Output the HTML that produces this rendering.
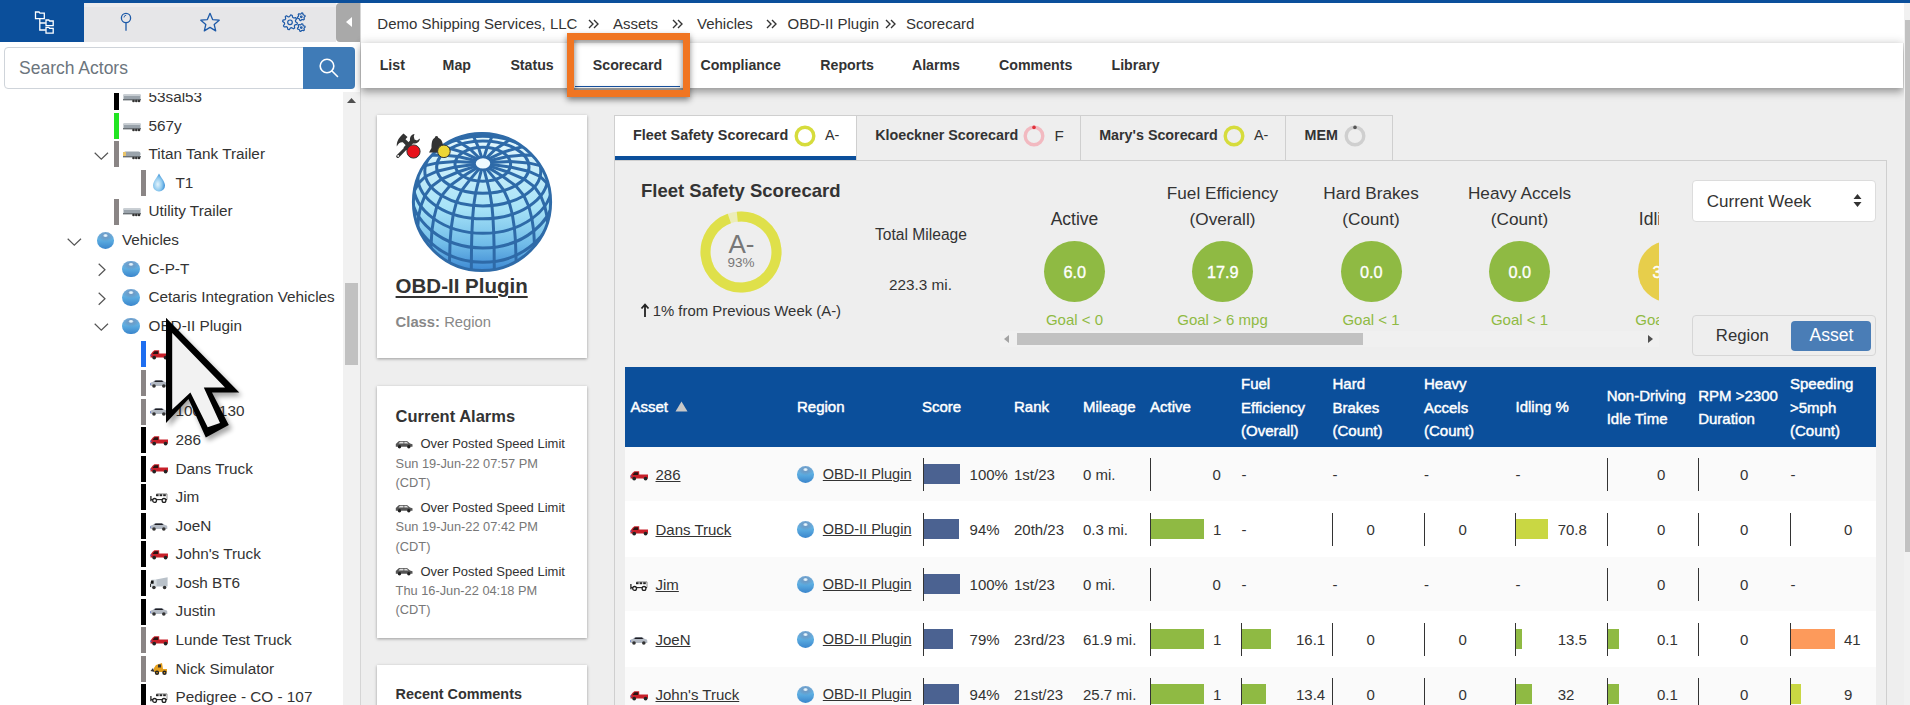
<!DOCTYPE html>
<html><head><meta charset="utf-8"><title>Scorecard</title>
<style>
*{box-sizing:border-box;margin:0;padding:0}
html,body{width:1910px;height:705px;overflow:hidden}
body{position:relative;background:#eeeeee;font-family:"Liberation Sans",sans-serif;color:#333}
.a{position:absolute}
.t{position:absolute;white-space:nowrap;line-height:1}
svg{position:absolute;overflow:visible}
u{text-decoration:underline;text-underline-offset:1px}
</style></head><body>
<div class="a" style="left:0px;top:0px;width:1910px;height:3px;background:#0b4f9b"></div>
<div class="a" style="left:0px;top:3px;width:360px;height:702px;background:#fff"></div>
<div class="a" style="left:0px;top:0px;width:84px;height:42px;background:#0b4f9b"></div>
<div class="a" style="left:84px;top:3px;width:252px;height:39px;background:#e6e6e8"></div>
<div class="a" style="left:84px;top:3px;width:252px;height:4px;background:#ececee"></div>
<div class="a" style="left:336px;top:3px;width:24px;height:39px;background:#a9a9a9;border-radius:4px 0 0 4px"></div>
<svg style="left:346px;top:17px" width="6" height="10"><path d="M6 0 L0 5 L6 10 Z" fill="#fff"/></svg>
<svg style="left:34px;top:10px" width="22" height="24" fill="none" stroke="#fff" stroke-width="1.3">
<path d="M1.5 2 h3.5 l1 1.2 h4.3 v5.4 h-8.8 z"/>
<path d="M5.8 8.8 v11.2 h6 M5.8 13 h6"/>
<path d="M12 10 h2.8 l0.8 1 h3.6 v4.7 h-7.2 z"/>
<path d="M12 17.4 h2.8 l0.8 1 h3.6 v4.7 h-7.2 z"/>
</svg>
<svg style="left:118px;top:10px" width="16" height="24" fill="none" stroke="#1d5aa8" stroke-width="1.3">
<circle cx="8" cy="8" r="4.6"/><path d="M8 12.6 V20.7"/><path d="M6 7.5 a2.2 2.2 0 0 1 2.2 -2.2" stroke-width="0.9"/>
</svg>
<svg style="left:199px;top:11px" width="22" height="22" fill="none" stroke="#1d5aa8" stroke-width="1.3" stroke-linejoin="round">
<path d="M11 2.3 L13.6 8.6 L20.2 9.2 L15.2 13.5 L16.7 19.9 L11 16.4 L5.3 19.9 L6.8 13.5 L1.8 9.2 L8.4 8.6 Z"/>
</svg>
<svg style="left:280px;top:12px" width="30" height="22" fill="none" stroke="#1d5aa8" stroke-width="1.2"><path d="M10.73 2.94 L12.15 3.22 L12.64 5.36 L13.55 5.97 L15.72 5.61 L16.53 6.81 L15.36 8.67 L15.57 9.75 L17.36 11.03 L17.08 12.45 L14.94 12.94 L14.33 13.85 L14.69 16.02 L13.49 16.83 L11.63 15.66 L10.55 15.87 L9.27 17.66 L7.85 17.38 L7.36 15.24 L6.45 14.63 L4.28 14.99 L3.47 13.79 L4.64 11.93 L4.43 10.85 L2.64 9.57 L2.92 8.15 L5.06 7.66 L5.67 6.75 L5.31 4.58 L6.51 3.77 L8.37 4.94 L9.45 4.73 Z" stroke-linejoin="round"/><circle cx="10" cy="10.3" r="2.3"/><path d="M21.81 0.93 L22.79 1.20 L23.07 2.50 L23.60 3.03 L24.90 3.31 L25.17 4.29 L24.18 5.18 L23.98 5.91 L24.39 7.17 L23.67 7.89 L22.41 7.48 L21.68 7.68 L20.79 8.67 L19.81 8.40 L19.53 7.10 L19.00 6.57 L17.70 6.29 L17.43 5.31 L18.42 4.42 L18.62 3.69 L18.21 2.43 L18.93 1.71 L20.19 2.12 L20.92 1.92 Z" stroke-linejoin="round"/><circle cx="21.3" cy="4.8" r="0.8"/><path d="M21.81 11.73 L22.79 12.00 L23.07 13.30 L23.60 13.83 L24.90 14.11 L25.17 15.09 L24.18 15.98 L23.98 16.71 L24.39 17.97 L23.67 18.69 L22.41 18.28 L21.68 18.48 L20.79 19.47 L19.81 19.20 L19.53 17.90 L19.00 17.37 L17.70 17.09 L17.43 16.11 L18.42 15.22 L18.62 14.49 L18.21 13.23 L18.93 12.51 L20.19 12.92 L20.92 12.72 Z" stroke-linejoin="round"/><circle cx="21.3" cy="15.6" r="0.8"/></svg>
<div class="a" style="left:4px;top:47px;width:300px;height:42px;background:#fff;border:1px solid #cfd4da;border-radius:4px 0 0 4px"></div>
<div class="t" style="left:19.0px;top:59.7px;font-size:17.5px;font-weight:400;color:#6c757d;">Search Actors</div>
<div class="a" style="left:303px;top:47px;width:52px;height:42px;background:#3f7bb7;border-radius:0 4px 4px 0"></div>
<svg style="left:318px;top:57px" width="22" height="22" fill="none" stroke="#fff" stroke-width="1.6">
<circle cx="9" cy="9" r="6.8"/><path d="M14 14 L19.5 19.5" stroke-linecap="round"/>
</svg>
<div class="a" style="left:360px;top:3px;width:1px;height:702px;background:#d5d5d5"></div>
<div class="a" style="left:343px;top:92px;width:17px;height:613px;background:#f1f1f1"></div>
<svg style="left:347px;top:98px" width="9" height="6"><path d="M0 5 L4.5 0 L9 5 Z" fill="#505050"/></svg>
<div class="a" style="left:345px;top:283px;width:13px;height:82px;background:#c1c1c1"></div>
<div class="a" style="left:0;top:93px;width:343px;height:612px;overflow:hidden">
<div class="a" style="left:0;top:-93px;width:343px;height:705px">
<div class="a" style="left:114px;top:84.2px;width:5px;height:26px;background:#000"></div>
<svg style="left:123px;top:93.0px" width="18" height="10">
<rect x="0.5" y="1.5" width="17" height="5" fill="#9aa3ab"/><rect x="0.5" y="1.5" width="17" height="1.5" fill="#c8ced3"/>
<rect x="0" y="6" width="18" height="1.4" fill="#6a7075"/><circle cx="10.5" cy="8" r="1.3" fill="#333"/><circle cx="13.3" cy="8" r="1.3" fill="#333"/><circle cx="16" cy="8" r="1.3" fill="#333"/></svg>
<div class="t" style="left:148.5px;top:89.1px;font-size:15.3px;font-weight:400;color:#333;">53sal53</div>
<div class="a" style="left:114px;top:112.8px;width:5px;height:26px;background:#22e522"></div>
<svg style="left:123px;top:121.6px" width="18" height="10">
<rect x="0.5" y="1.5" width="17" height="5" fill="#9aa3ab"/><rect x="0.5" y="1.5" width="17" height="1.5" fill="#c8ced3"/>
<rect x="0" y="6" width="18" height="1.4" fill="#6a7075"/><circle cx="10.5" cy="8" r="1.3" fill="#333"/><circle cx="13.3" cy="8" r="1.3" fill="#333"/><circle cx="16" cy="8" r="1.3" fill="#333"/></svg>
<div class="t" style="left:148.5px;top:117.7px;font-size:15.3px;font-weight:400;color:#333;">567y</div>
<div class="a" style="left:114px;top:141.3px;width:5px;height:26px;background:#8a8585"></div>
<svg style="left:94px;top:151.8px" width="15" height="8"><path d="M0.7 0.7 L7.3 7.2 L14 0.7" fill="none" stroke="#555" stroke-width="1.2"/></svg>
<svg style="left:123px;top:150.1px" width="18" height="10">
<rect x="0.5" y="1.5" width="17" height="5" rx="2" fill="#9aa3ab"/><rect x="0" y="2" width="3" height="4" fill="#e9c46a"/>
<rect x="0" y="6" width="18" height="1.4" fill="#6a7075"/><circle cx="10.5" cy="8" r="1.3" fill="#333"/><circle cx="13.3" cy="8" r="1.3" fill="#333"/><circle cx="16" cy="8" r="1.3" fill="#333"/></svg>
<div class="t" style="left:148.5px;top:146.3px;font-size:15.3px;font-weight:400;color:#333;">Titan Tank Trailer</div>
<div class="a" style="left:141px;top:169.9px;width:5px;height:26px;background:#8a8585"></div>
<svg style="left:152px;top:173.4px" width="14" height="19">
<defs><radialGradient id="dg" cx="40%" cy="60%" r="60%"><stop offset="0" stop-color="#e3f3fc"/><stop offset="0.6" stop-color="#8cc8ee"/><stop offset="1" stop-color="#3b8fd6"/></radialGradient></defs>
<path d="M7 0.5 C8.5 4 13 8.5 13 12.5 A6 6 0 0 1 1 12.5 C1 8.5 5.5 4 7 0.5 Z" fill="url(#dg)"/></svg>
<div class="t" style="left:175.5px;top:174.9px;font-size:15.3px;font-weight:400;color:#333;">T1</div>
<div class="a" style="left:114px;top:198.5px;width:5px;height:26px;background:#8a8585"></div>
<svg style="left:123px;top:207.3px" width="18" height="10">
<rect x="0.5" y="1.5" width="17" height="5" fill="#9aa3ab"/><rect x="0.5" y="1.5" width="17" height="1.5" fill="#c8ced3"/>
<rect x="0" y="6" width="18" height="1.4" fill="#6a7075"/><circle cx="10.5" cy="8" r="1.3" fill="#333"/><circle cx="13.3" cy="8" r="1.3" fill="#333"/><circle cx="16" cy="8" r="1.3" fill="#333"/></svg>
<div class="t" style="left:148.5px;top:203.4px;font-size:15.3px;font-weight:400;color:#333;">Utility Trailer</div>
<div class="a" style="left:96.8px;top:232.0px;width:17.4px;height:16.8px;border-radius:50%;background:radial-gradient(ellipse 22% 16% at 50% 21%, #eef7fc 0%, #d7ebf7 35%, rgba(110,155,198,0.95) 70%, rgba(110,155,198,0) 100%), radial-gradient(ellipse 45% 30% at 50% 26%, rgba(108,150,192,0.9) 0%, rgba(108,150,192,0.5) 60%, rgba(108,150,192,0) 100%), linear-gradient(#78addb, #5eafe2 45%, #3a85cc)"></div>
<svg style="left:66.5px;top:237.6px" width="15" height="8"><path d="M0.7 0.7 L7.3 7.2 L14 0.7" fill="none" stroke="#555" stroke-width="1.2"/></svg>
<div class="t" style="left:122.0px;top:232.0px;font-size:15.3px;font-weight:400;color:#333;">Vehicles</div>
<div class="a" style="left:122.3px;top:260.5px;width:17.4px;height:16.8px;border-radius:50%;background:radial-gradient(ellipse 22% 16% at 50% 21%, #eef7fc 0%, #d7ebf7 35%, rgba(110,155,198,0.95) 70%, rgba(110,155,198,0) 100%), radial-gradient(ellipse 45% 30% at 50% 26%, rgba(108,150,192,0.9) 0%, rgba(108,150,192,0.5) 60%, rgba(108,150,192,0) 100%), linear-gradient(#78addb, #5eafe2 45%, #3a85cc)"></div>
<svg style="left:98px;top:263.4px" width="8" height="14"><path d="M0.7 0.7 L7 6.7 L0.7 12.8" fill="none" stroke="#555" stroke-width="1.2"/></svg>
<div class="t" style="left:148.5px;top:260.6px;font-size:15.3px;font-weight:400;color:#333;">C-P-T</div>
<div class="a" style="left:122.3px;top:289.1px;width:17.4px;height:16.8px;border-radius:50%;background:radial-gradient(ellipse 22% 16% at 50% 21%, #eef7fc 0%, #d7ebf7 35%, rgba(110,155,198,0.95) 70%, rgba(110,155,198,0) 100%), radial-gradient(ellipse 45% 30% at 50% 26%, rgba(108,150,192,0.9) 0%, rgba(108,150,192,0.5) 60%, rgba(108,150,192,0) 100%), linear-gradient(#78addb, #5eafe2 45%, #3a85cc)"></div>
<svg style="left:98px;top:292.0px" width="8" height="14"><path d="M0.7 0.7 L7 6.7 L0.7 12.8" fill="none" stroke="#555" stroke-width="1.2"/></svg>
<div class="t" style="left:148.5px;top:289.1px;font-size:15.3px;font-weight:400;color:#333;">Cetaris Integration Vehicles</div>
<div class="a" style="left:122.3px;top:317.7px;width:17.4px;height:16.8px;border-radius:50%;background:radial-gradient(ellipse 22% 16% at 50% 21%, #eef7fc 0%, #d7ebf7 35%, rgba(110,155,198,0.95) 70%, rgba(110,155,198,0) 100%), radial-gradient(ellipse 45% 30% at 50% 26%, rgba(108,150,192,0.9) 0%, rgba(108,150,192,0.5) 60%, rgba(108,150,192,0) 100%), linear-gradient(#78addb, #5eafe2 45%, #3a85cc)"></div>
<svg style="left:94px;top:323.3px" width="15" height="8"><path d="M0.7 0.7 L7.3 7.2 L14 0.7" fill="none" stroke="#555" stroke-width="1.2"/></svg>
<div class="t" style="left:148.5px;top:317.7px;font-size:15.3px;font-weight:400;color:#333;">OBD-II Plugin</div>
<div class="a" style="left:141px;top:341.3px;width:5px;height:26px;background:#1e6ef0"></div>
<svg style="left:150px;top:350.1px" width="18" height="10">
<path d="M0.5 4.6 L2.6 1.8 L4.4 0.3 L9.2 0.3 L9.2 3.4 L18 3.4 L18 7.6 L0.5 7.6 Z" fill="#c8202a"/><path d="M4.6 1.3 L8.2 1.3 L8.2 3.9 L2.6 3.9 Z" fill="#2a1212"/><rect x="0.3" y="4.6" width="1.2" height="1.4" fill="#4a6fd0"/>
<circle cx="4.2" cy="7.6" r="1.9" fill="#222"/><circle cx="15.6" cy="7.6" r="1.9" fill="#222"/></svg>
<div class="t" style="left:175.5px;top:346.3px;font-size:15.3px;font-weight:400;color:#333;"></div>
<div class="a" style="left:141px;top:369.9px;width:5px;height:26px;background:#8a8585"></div>
<svg style="left:150px;top:378.7px" width="18" height="10">
<path d="M0.3 4.6 C0.3 3.8 1 3.3 2.6 3.1 L5.2 1 L12.2 1 L14.9 3.1 C16.6 3.3 17.3 3.9 17.3 4.8 L17.3 7 L0.3 7 Z" fill="#b3bac4"/><path d="M5.6 1.4 L11.8 1.4 L13.6 3.1 L4 3.1 Z" fill="#1e1e24"/><rect x="0" y="4.2" width="1" height="1.8" fill="#7a8ccc"/>
<circle cx="4" cy="7" r="1.8" fill="#333"/><circle cx="13.8" cy="7" r="1.8" fill="#333"/></svg>
<div class="t" style="left:175.5px;top:374.9px;font-size:15.3px;font-weight:400;color:#333;"></div>
<div class="a" style="left:141px;top:398.5px;width:5px;height:26px;background:#8a8585"></div>
<svg style="left:150px;top:407.3px" width="18" height="10">
<path d="M0.3 4.6 C0.3 3.8 1 3.3 2.6 3.1 L5.2 1 L12.2 1 L14.9 3.1 C16.6 3.3 17.3 3.9 17.3 4.8 L17.3 7 L0.3 7 Z" fill="#b3bac4"/><path d="M5.6 1.4 L11.8 1.4 L13.6 3.1 L4 3.1 Z" fill="#1e1e24"/><rect x="0" y="4.2" width="1" height="1.8" fill="#7a8ccc"/>
<circle cx="4" cy="7" r="1.8" fill="#333"/><circle cx="13.8" cy="7" r="1.8" fill="#333"/></svg>
<div class="t" style="left:175.5px;top:403.4px;font-size:15.3px;font-weight:400;color:#333;">1000T130</div>
<div class="a" style="left:141px;top:427.1px;width:5px;height:26px;background:#000"></div>
<svg style="left:150px;top:435.9px" width="18" height="10">
<path d="M0.5 4.6 L2.6 1.8 L4.4 0.3 L9.2 0.3 L9.2 3.4 L18 3.4 L18 7.6 L0.5 7.6 Z" fill="#c8202a"/><path d="M4.6 1.3 L8.2 1.3 L8.2 3.9 L2.6 3.9 Z" fill="#2a1212"/><rect x="0.3" y="4.6" width="1.2" height="1.4" fill="#4a6fd0"/>
<circle cx="4.2" cy="7.6" r="1.9" fill="#222"/><circle cx="15.6" cy="7.6" r="1.9" fill="#222"/></svg>
<div class="t" style="left:175.5px;top:432.0px;font-size:15.3px;font-weight:400;color:#333;">286</div>
<div class="a" style="left:141px;top:455.6px;width:5px;height:26px;background:#000"></div>
<svg style="left:150px;top:464.4px" width="18" height="10">
<path d="M0.5 4.6 L2.6 1.8 L4.4 0.3 L9.2 0.3 L9.2 3.4 L18 3.4 L18 7.6 L0.5 7.6 Z" fill="#c8202a"/><path d="M4.6 1.3 L8.2 1.3 L8.2 3.9 L2.6 3.9 Z" fill="#2a1212"/><rect x="0.3" y="4.6" width="1.2" height="1.4" fill="#4a6fd0"/>
<circle cx="4.2" cy="7.6" r="1.9" fill="#222"/><circle cx="15.6" cy="7.6" r="1.9" fill="#222"/></svg>
<div class="t" style="left:175.5px;top:460.6px;font-size:15.3px;font-weight:400;color:#333;">Dans Truck</div>
<div class="a" style="left:141px;top:484.2px;width:5px;height:26px;background:#000"></div>
<svg style="left:150px;top:493.0px" width="18" height="11">
<path d="M3.2 3 L5.6 0.9 L17 0.9 L17 6.6 L1.8 6.6 L1.8 4 Z" fill="#fff"/><rect x="6" y="1.2" width="2.6" height="2" fill="#222"/><rect x="9.6" y="1.2" width="2.6" height="2" fill="#222"/><rect x="13.2" y="1.2" width="2.6" height="2" fill="#222"/><path d="M6.5 0.9 H17 V6.6" fill="none" stroke="#444" stroke-width="0.6"/>
<path d="M0.9 3 V8.2" stroke="#222" stroke-width="1.3"/><path d="M1 6.6 H17" stroke="#222" stroke-width="1.1"/>
<circle cx="4.6" cy="7.4" r="1.9" fill="#fff" stroke="#222" stroke-width="1.3"/><circle cx="14" cy="7.4" r="1.9" fill="#fff" stroke="#222" stroke-width="1.3"/></svg>
<div class="t" style="left:175.5px;top:489.1px;font-size:15.3px;font-weight:400;color:#333;">Jim</div>
<div class="a" style="left:141px;top:512.8px;width:5px;height:26px;background:#000"></div>
<svg style="left:150px;top:521.6px" width="18" height="10">
<path d="M0.3 4.6 C0.3 3.8 1 3.3 2.6 3.1 L5.2 1 L12.2 1 L14.9 3.1 C16.6 3.3 17.3 3.9 17.3 4.8 L17.3 7 L0.3 7 Z" fill="#b3bac4"/><path d="M5.6 1.4 L11.8 1.4 L13.6 3.1 L4 3.1 Z" fill="#1e1e24"/><rect x="0" y="4.2" width="1" height="1.8" fill="#7a8ccc"/>
<circle cx="4" cy="7" r="1.8" fill="#333"/><circle cx="13.8" cy="7" r="1.8" fill="#333"/></svg>
<div class="t" style="left:175.5px;top:517.7px;font-size:15.3px;font-weight:400;color:#333;">JoeN</div>
<div class="a" style="left:141px;top:541.3px;width:5px;height:26px;background:#000"></div>
<svg style="left:150px;top:550.1px" width="18" height="10">
<path d="M0.5 4.6 L2.6 1.8 L4.4 0.3 L9.2 0.3 L9.2 3.4 L18 3.4 L18 7.6 L0.5 7.6 Z" fill="#c8202a"/><path d="M4.6 1.3 L8.2 1.3 L8.2 3.9 L2.6 3.9 Z" fill="#2a1212"/><rect x="0.3" y="4.6" width="1.2" height="1.4" fill="#4a6fd0"/>
<circle cx="4.2" cy="7.6" r="1.9" fill="#222"/><circle cx="15.6" cy="7.6" r="1.9" fill="#222"/></svg>
<div class="t" style="left:175.5px;top:546.3px;font-size:15.3px;font-weight:400;color:#333;">John's Truck</div>
<div class="a" style="left:141px;top:569.9px;width:5px;height:26px;background:#000"></div>
<svg style="left:150px;top:576.7px" width="18" height="14">
<path d="M6 2.6 L17.6 0.3 L17.6 9.6 L6 9.6 Z" fill="#b9c1c9"/><path d="M0.3 5.2 L1.8 2.6 L6.6 2.6 L6.6 10.4 L0.3 10.4 Z" fill="#d5dbe0"/><path d="M1.2 3.4 L3.6 3.4 L3.6 6.8 L0.5 6.8 Z" fill="#111"/><rect x="0" y="7" width="0.9" height="3" fill="#222"/>
<circle cx="3.9" cy="10.5" r="1.8" fill="#333"/><circle cx="14.6" cy="10.5" r="1.8" fill="#333"/></svg>
<div class="t" style="left:175.5px;top:574.9px;font-size:15.3px;font-weight:400;color:#333;">Josh BT6</div>
<div class="a" style="left:141px;top:598.5px;width:5px;height:26px;background:#000"></div>
<svg style="left:150px;top:607.3px" width="18" height="10">
<path d="M0.3 4.6 C0.3 3.8 1 3.3 2.6 3.1 L5.2 1 L12.2 1 L14.9 3.1 C16.6 3.3 17.3 3.9 17.3 4.8 L17.3 7 L0.3 7 Z" fill="#b3bac4"/><path d="M5.6 1.4 L11.8 1.4 L13.6 3.1 L4 3.1 Z" fill="#1e1e24"/><rect x="0" y="4.2" width="1" height="1.8" fill="#7a8ccc"/>
<circle cx="4" cy="7" r="1.8" fill="#333"/><circle cx="13.8" cy="7" r="1.8" fill="#333"/></svg>
<div class="t" style="left:175.5px;top:603.4px;font-size:15.3px;font-weight:400;color:#333;">Justin</div>
<div class="a" style="left:141px;top:627.0px;width:5px;height:26px;background:#8a8585"></div>
<svg style="left:150px;top:635.8px" width="18" height="10">
<path d="M0.5 4.6 L2.6 1.8 L4.4 0.3 L9.2 0.3 L9.2 3.4 L18 3.4 L18 7.6 L0.5 7.6 Z" fill="#c8202a"/><path d="M4.6 1.3 L8.2 1.3 L8.2 3.9 L2.6 3.9 Z" fill="#2a1212"/><rect x="0.3" y="4.6" width="1.2" height="1.4" fill="#4a6fd0"/>
<circle cx="4.2" cy="7.6" r="1.9" fill="#222"/><circle cx="15.6" cy="7.6" r="1.9" fill="#222"/></svg>
<div class="t" style="left:175.5px;top:632.0px;font-size:15.3px;font-weight:400;color:#333;">Lunde Test Truck</div>
<div class="a" style="left:141px;top:655.6px;width:5px;height:26px;background:#8a8585"></div>
<svg style="left:150px;top:662.4px" width="18" height="14">
<path d="M6 3 L12 1 L13 7 L17 7 L17 10 L4 10 L4 6 Z" fill="#e5a01e"/><rect x="8" y="2.5" width="3" height="3" fill="#333"/><path d="M0.5 9 L3 6 L4.5 10 Z" fill="#333"/>
<circle cx="7" cy="10.8" r="2.2" fill="#222"/><circle cx="14.5" cy="10.8" r="2.2" fill="#222"/><circle cx="7" cy="10.8" r="0.8" fill="#e5a01e"/><circle cx="14.5" cy="10.8" r="0.8" fill="#e5a01e"/></svg>
<div class="t" style="left:175.5px;top:660.6px;font-size:15.3px;font-weight:400;color:#333;">Nick Simulator</div>
<div class="a" style="left:141px;top:684.2px;width:5px;height:26px;background:#000"></div>
<svg style="left:150px;top:693.0px" width="18" height="11">
<path d="M3.2 3 L5.6 0.9 L17 0.9 L17 6.6 L1.8 6.6 L1.8 4 Z" fill="#fff"/><rect x="6" y="1.2" width="2.6" height="2" fill="#222"/><rect x="9.6" y="1.2" width="2.6" height="2" fill="#222"/><rect x="13.2" y="1.2" width="2.6" height="2" fill="#222"/><path d="M6.5 0.9 H17 V6.6" fill="none" stroke="#444" stroke-width="0.6"/>
<path d="M0.9 3 V8.2" stroke="#222" stroke-width="1.3"/><path d="M1 6.6 H17" stroke="#222" stroke-width="1.1"/>
<circle cx="4.6" cy="7.4" r="1.9" fill="#fff" stroke="#222" stroke-width="1.3"/><circle cx="14" cy="7.4" r="1.9" fill="#fff" stroke="#222" stroke-width="1.3"/></svg>
<div class="t" style="left:175.5px;top:689.1px;font-size:15.3px;font-weight:400;color:#333;">Pedigree - CO - 107</div>
</div></div>
<svg style="left:0;top:0" width="300" height="460">
<defs><filter id="cs" x="-30%" y="-30%" width="160%" height="160%"><feGaussianBlur stdDeviation="2.5"/></filter></defs>
<polygon points="169,322 169,427 191,403 208,441 232,429 215,397 242,396" fill="#000" opacity="0.35" filter="url(#cs)"/>
<polygon points="166,317.7 166,423 188.5,399 205.8,437.4 228.8,425 212,392.4 239.3,392.4" fill="#000"/>
<polygon points="172.2,333 172.2,409.6 190.4,392.4 207.7,427.2 220,423 203.8,387.6 225,387.6" fill="#f2f2f2"/>
</svg>
<div class="a" style="left:361px;top:3px;width:1543px;height:40px;background:#fff"></div>
<div class="t" style="left:377.3px;top:16.3px;font-size:15px;font-weight:400;color:#333;letter-spacing:0px">Demo Shipping Services, LLC</div>
<div class="t" style="left:697.0px;top:16.3px;font-size:15px;font-weight:400;color:#333;letter-spacing:0px">Vehicles</div>
<div class="t" style="left:613.0px;top:16.3px;font-size:15px;font-weight:400;color:#333;letter-spacing:0px">Assets</div>
<div class="t" style="left:787.5px;top:16.3px;font-size:15px;font-weight:400;color:#333;letter-spacing:0px">OBD-II Plugin</div>
<div class="t" style="left:906.0px;top:16.3px;font-size:15px;font-weight:400;color:#333;letter-spacing:0px">Scorecard</div>
<svg style="left:588px;top:19px" width="11" height="10" fill="none" stroke="#333" stroke-width="1.35"><path d="M1 1 L5 5 L1 9 M6 1 L10 5 L6 9"/></svg>
<svg style="left:672px;top:19px" width="11" height="10" fill="none" stroke="#333" stroke-width="1.35"><path d="M1 1 L5 5 L1 9 M6 1 L10 5 L6 9"/></svg>
<svg style="left:766.3px;top:19px" width="11" height="10" fill="none" stroke="#333" stroke-width="1.35"><path d="M1 1 L5 5 L1 9 M6 1 L10 5 L6 9"/></svg>
<svg style="left:884.5px;top:19px" width="11" height="10" fill="none" stroke="#333" stroke-width="1.35"><path d="M1 1 L5 5 L1 9 M6 1 L10 5 L6 9"/></svg>
<div class="a" style="left:361px;top:43px;width:1542px;height:45px;background:#fff;box-shadow:0 -3px 8px rgba(0,0,0,0.07), 0 4px 8px rgba(0,0,0,0.36)"></div>
<div class="t" style="left:379.7px;top:57.5px;font-size:14.2px;font-weight:700;color:#333;">List</div>
<div class="t" style="left:442.6px;top:57.5px;font-size:14.2px;font-weight:700;color:#333;">Map</div>
<div class="t" style="left:510.4px;top:57.5px;font-size:14.2px;font-weight:700;color:#333;">Status</div>
<div class="t" style="left:592.8px;top:57.5px;font-size:14.2px;font-weight:700;color:#333;">Scorecard</div>
<div class="t" style="left:700.4px;top:57.5px;font-size:14.2px;font-weight:700;color:#333;">Compliance</div>
<div class="t" style="left:820.3px;top:57.5px;font-size:14.2px;font-weight:700;color:#333;">Reports</div>
<div class="t" style="left:911.9px;top:57.5px;font-size:14.2px;font-weight:700;color:#333;">Alarms</div>
<div class="t" style="left:999.0px;top:57.5px;font-size:14.2px;font-weight:700;color:#333;">Comments</div>
<div class="t" style="left:1111.5px;top:57.5px;font-size:14.2px;font-weight:700;color:#333;">Library</div>
<div class="a" style="left:575px;top:85.6px;width:105px;height:1.6px;background:#1753a3"></div>
<div class="a" style="left:567px;top:33px;width:123px;height:64px;border:7px solid #f07522;box-shadow:0 3px 6px rgba(0,0,0,0.45), inset 0 1px 6px rgba(0,0,0,0.55)"></div>
<div class="a" style="left:1904px;top:3px;width:6px;height:702px;background:#f1f1f1"></div>
<div class="a" style="left:1905px;top:20px;width:5px;height:532px;background:#c1c1c1"></div>
<div class="a" style="left:377px;top:115px;width:210px;height:243px;background:#fff;box-shadow:0 1px 3px rgba(0,0,0,0.35)"></div>
<div class="a" style="left:377px;top:386px;width:210px;height:252px;background:#fff;box-shadow:0 1px 3px rgba(0,0,0,0.35)"></div>
<div class="a" style="left:377px;top:665px;width:210px;height:60px;background:#fff;box-shadow:0 1px 3px rgba(0,0,0,0.35)"></div>
<svg style="left:407.2px;top:126.7px" width="150" height="150"><defs><linearGradient id="bg1" x1="0" y1="0" x2="0" y2="1"><stop offset="0" stop-color="#e8f9fd"/><stop offset="0.55" stop-color="#a6e2f7"/><stop offset="0.8" stop-color="#72bde9"/><stop offset="1" stop-color="#3c88d3"/></linearGradient><clipPath id="gc"><circle cx="75" cy="75" r="69.2"/></clipPath></defs><circle cx="75" cy="75" r="69.2" fill="url(#bg1)"/><g clip-path="url(#gc)" fill="none" stroke="#2e6aa8" stroke-width="3"><ellipse cx="75.8" cy="37.3" rx="27.8" ry="17.0"/><ellipse cx="75.8" cy="40.1" rx="46.2" ry="26.2"/><ellipse cx="75.8" cy="44.1" rx="58" ry="34.8"/><ellipse cx="75.8" cy="49.6" rx="65" ry="42.2"/><ellipse cx="75.8" cy="56.3" rx="69.5" ry="50.0"/><ellipse cx="75.8" cy="63.1" rx="72" ry="57.8"/><ellipse cx="75.8" cy="69.8" rx="73" ry="65.5"/><ellipse cx="75.8" cy="76.3" rx="74" ry="73.0"/><path d="M84.2 37.4 L103.3 40.0 L121.4 44.2 L133.1 49.5 L140.0 56.2 L144.4 64.1 L146.9 72.1 L147.9 80.0 L148.9 87.7"/><path d="M83.4 39.3 L100.6 45.0 L117.0 52.0 L127.5 59.8 L133.7 68.7 L137.7 79.0 L140.0 89.3 L140.8 99.5 L141.7 109.4"/><path d="M81.8 40.9 L95.5 49.3 L108.5 58.6 L116.8 68.6 L121.8 79.4 L124.9 91.7 L126.7 103.9 L127.4 116.1 L128.1 127.9"/><path d="M79.7 42.1 L88.4 52.4 L96.8 63.4 L102.1 75.0 L105.3 87.2 L107.4 100.9 L108.5 114.5 L108.9 128.2 L109.4 141.3"/><path d="M77.1 42.7 L80.1 54.1 L83.0 66.0 L84.9 78.4 L86.0 91.3 L86.7 105.7 L87.1 120.1 L87.2 134.5 L87.4 148.4"/><path d="M74.5 42.7 L71.5 54.1 L68.6 66.0 L66.7 78.4 L65.6 91.3 L64.9 105.7 L64.5 120.1 L64.4 134.5 L64.2 148.4"/><path d="M71.9 42.1 L63.2 52.4 L54.8 63.4 L49.5 75.0 L46.3 87.2 L44.2 100.9 L43.1 114.5 L42.7 128.2 L42.2 141.3"/><path d="M69.8 40.9 L56.1 49.3 L43.1 58.6 L34.8 68.6 L29.8 79.4 L26.7 91.7 L24.9 103.9 L24.2 116.1 L23.5 127.9"/><path d="M68.2 39.3 L51.0 45.0 L34.6 52.0 L24.1 59.8 L17.9 68.7 L13.9 79.0 L11.6 89.3 L10.8 99.5 L9.9 109.4"/><path d="M67.4 37.4 L48.3 40.0 L30.2 44.2 L18.5 49.5 L11.6 56.2 L7.2 64.1 L4.7 72.1 L3.7 80.0 L2.7 87.7"/><path d="M67.4 35.4 L48.3 34.6 L30.2 35.9 L18.5 38.6 L11.6 42.9 L7.2 48.5 L4.7 54.0 L3.7 59.6 L2.7 64.9"/><path d="M68.2 33.5 L51.0 29.6 L34.6 28.1 L24.1 28.3 L17.9 30.4 L13.9 33.6 L11.6 36.8 L10.8 40.1 L9.9 43.2"/><path d="M69.8 31.9 L56.1 25.3 L43.1 21.5 L34.8 19.5 L29.8 19.7 L26.7 20.9 L24.9 22.2 L24.2 23.5 L23.5 24.7"/><path d="M71.9 30.7 L63.2 22.2 L54.8 16.7 L49.5 13.1 L46.3 11.9 L44.2 11.7 L43.1 11.6 L42.7 11.4 L42.2 11.3"/><path d="M74.5 30.1 L71.5 20.5 L68.6 14.1 L66.7 9.7 L65.6 7.8 L64.9 6.9 L64.5 6.0 L64.4 5.1 L64.2 4.2"/><path d="M77.1 30.1 L80.1 20.5 L83.0 14.1 L84.9 9.7 L86.0 7.8 L86.7 6.9 L87.1 6.0 L87.2 5.1 L87.4 4.2"/><path d="M79.7 30.7 L88.4 22.2 L96.8 16.7 L102.1 13.1 L105.3 11.9 L107.4 11.7 L108.5 11.6 L108.9 11.4 L109.4 11.3"/><path d="M81.8 31.9 L95.5 25.3 L108.5 21.5 L116.8 19.5 L121.8 19.7 L124.9 20.9 L126.7 22.2 L127.4 23.5 L128.1 24.7"/><path d="M83.4 33.5 L100.6 29.6 L117.0 28.1 L127.5 28.3 L133.7 30.4 L137.7 33.6 L140.0 36.8 L140.8 40.1 L141.7 43.2"/><path d="M84.2 35.4 L103.3 34.6 L121.4 35.9 L133.1 38.6 L140.0 42.9 L144.4 48.5 L146.9 54.0 L147.9 59.6 L148.9 64.9"/></g><circle cx="75" cy="75" r="68.60000000000001" fill="none" stroke="#2f6ba8" stroke-width="3"/><ellipse cx="76.0" cy="36.4" rx="8.5" ry="6.4" fill="#effbff" stroke="#2e6aa8" stroke-width="2.6"/></svg>
<svg style="left:390px;top:128px" width="70" height="40">
<g fill="#333">
<path d="M7.8 28.4 L19.5 16.5" stroke="#333" stroke-width="3.2" stroke-linecap="round"/>
<path d="M13.5 5.5 L17.5 9 L15.5 11.3 L19.5 15 L16.5 18 L12.8 14.2 C10.5 13.8 8.2 15.2 6.8 18.5 C6.3 13.5 9 9.2 13.5 5.5 Z"/>
<path d="M24.5 6 C21 6.5 19.5 9.5 20 12.5 L13.5 19.5 L16.5 22.5 L23 15.5 C26 16 29.5 14.5 30 10.5 L27 12.5 L24.5 11.5 L23.8 8.5 Z"/>
</g>
<circle cx="8.2" cy="27.9" r="0.9" fill="#fff"/>
<circle cx="23.5" cy="23.5" r="6.6" fill="#e8101a" stroke="#333" stroke-width="1"/>
<path d="M46.5 8 C47.6 8 48.2 9 48.2 9.8 C52 11.3 53 15 53 19 L55.5 24.5 L39 24.5 L41.5 20 C41.5 15 42 11.3 44.8 9.8 C44.8 9 45.4 8 46.5 8 Z" fill="#333"/>
<circle cx="53.9" cy="23.3" r="6.3" fill="#ecd636" stroke="#333" stroke-width="1"/>
</svg>
<div class="t" style="left:395.6px;top:276.0px;font-size:20.5px;font-weight:700;color:#333;"><u style="text-decoration-thickness:2px;text-underline-offset:3px">OBD-II Plugin</u></div>
<div class="t" style="left:395.6px;top:314.5px;font-size:14.8px;font-weight:400;color:#888;"><b style="color:#888">Class:</b> Region</div>
<div class="t" style="left:395.6px;top:408.0px;font-size:16.5px;font-weight:700;color:#333;">Current Alarms</div>
<svg style="left:395px;top:438.9px" width="18" height="10">
<path d="M0.8 5 L4 2 L12 2 L15 4.5 L17.5 5.2 L17.5 7.8 L0.8 7.8 Z" fill="#555"/><path d="M5 2.8 L8.5 2.8 L8.5 4.5 L3.5 4.5 Z M9.3 2.8 L11.6 2.8 L13.5 4.5 L9.3 4.5 Z" fill="#ddd"/>
<circle cx="4.5" cy="7.8" r="1.7" fill="#222"/><circle cx="13.8" cy="7.8" r="1.7" fill="#222"/></svg>
<div class="t" style="left:420.4px;top:437.4px;font-size:13px;font-weight:400;color:#333;">Over Posted Speed Limit</div>
<div class="t" style="left:395.6px;top:457.6px;font-size:12.8px;font-weight:400;color:#777;">Sun 19-Jun-22 07:57 PM</div>
<div class="t" style="left:395.6px;top:477.1px;font-size:12.8px;font-weight:400;color:#777;">(CDT)</div>
<svg style="left:395px;top:502.5px" width="18" height="10">
<path d="M0.8 5 L4 2 L12 2 L15 4.5 L17.5 5.2 L17.5 7.8 L0.8 7.8 Z" fill="#555"/><path d="M5 2.8 L8.5 2.8 L8.5 4.5 L3.5 4.5 Z M9.3 2.8 L11.6 2.8 L13.5 4.5 L9.3 4.5 Z" fill="#ddd"/>
<circle cx="4.5" cy="7.8" r="1.7" fill="#222"/><circle cx="13.8" cy="7.8" r="1.7" fill="#222"/></svg>
<div class="t" style="left:420.4px;top:501.0px;font-size:13px;font-weight:400;color:#333;">Over Posted Speed Limit</div>
<div class="t" style="left:395.6px;top:521.2px;font-size:12.8px;font-weight:400;color:#777;">Sun 19-Jun-22 07:42 PM</div>
<div class="t" style="left:395.6px;top:540.7px;font-size:12.8px;font-weight:400;color:#777;">(CDT)</div>
<svg style="left:395px;top:566.1px" width="18" height="10">
<path d="M0.8 5 L4 2 L12 2 L15 4.5 L17.5 5.2 L17.5 7.8 L0.8 7.8 Z" fill="#555"/><path d="M5 2.8 L8.5 2.8 L8.5 4.5 L3.5 4.5 Z M9.3 2.8 L11.6 2.8 L13.5 4.5 L9.3 4.5 Z" fill="#ddd"/>
<circle cx="4.5" cy="7.8" r="1.7" fill="#222"/><circle cx="13.8" cy="7.8" r="1.7" fill="#222"/></svg>
<div class="t" style="left:420.4px;top:564.6px;font-size:13px;font-weight:400;color:#333;">Over Posted Speed Limit</div>
<div class="t" style="left:395.6px;top:584.8px;font-size:12.8px;font-weight:400;color:#777;">Thu 16-Jun-22 04:18 PM</div>
<div class="t" style="left:395.6px;top:604.3px;font-size:12.8px;font-weight:400;color:#777;">(CDT)</div>
<div class="t" style="left:395.6px;top:686.8px;font-size:14.4px;font-weight:700;color:#333;">Recent Comments</div>
<div class="a" style="left:614px;top:160px;width:1273px;height:545px;border:1px solid #cfcfcf;border-bottom:none;background:#eeeeee"></div>
<div class="a" style="left:614px;top:115px;width:779px;height:46px;border:1px solid #cfcfcf;background:#eeeeee"></div>
<div class="a" style="left:615px;top:116px;width:241px;height:44px;background:#fff"></div>
<div class="a" style="left:615px;top:156px;width:241px;height:4px;background:#0b4f9b"></div>
<div class="a" style="left:856px;top:116px;width:1px;height:44px;background:#cfcfcf"></div>
<div class="a" style="left:1080px;top:116px;width:1px;height:44px;background:#cfcfcf"></div>
<div class="a" style="left:1285px;top:116px;width:1px;height:44px;background:#cfcfcf"></div>
<div class="t" style="left:633.0px;top:128.3px;font-size:14.4px;font-weight:700;color:#333;">Fleet Safety Scorecard</div>
<svg style="left:794px;top:125px" width="22" height="22"><circle cx="11" cy="11" r="8.8" fill="none" stroke="#d6dc3c" stroke-width="3.4"/></svg>
<div class="t" style="left:825.0px;top:128.3px;font-size:14.4px;font-weight:400;color:#333;">A-</div>
<div class="t" style="left:875.2px;top:128.4px;font-size:14.3px;font-weight:700;color:#333;">Kloeckner Scorecard</div>
<svg style="left:1023.4000000000001px;top:125px" width="22" height="22"><circle cx="11" cy="11" r="8.8" fill="none" stroke="#f2b9c0" stroke-width="3.4"/><circle cx="11" cy="2.4" r="1.8" fill="#e0303a"/></svg>
<div class="t" style="left:1054.5px;top:127.9px;font-size:15.2px;font-weight:400;color:#333;">F</div>
<div class="t" style="left:1099.2px;top:128.4px;font-size:14.3px;font-weight:700;color:#333;">Mary's Scorecard</div>
<svg style="left:1223px;top:125px" width="22" height="22"><circle cx="11" cy="11" r="8.8" fill="none" stroke="#d6dc3c" stroke-width="3.4"/></svg>
<div class="t" style="left:1254.0px;top:128.3px;font-size:14.4px;font-weight:400;color:#333;">A-</div>
<div class="t" style="left:1304.6px;top:128.4px;font-size:14.3px;font-weight:700;color:#333;">MEM</div>
<svg style="left:1343.7px;top:125px" width="22" height="22"><circle cx="11" cy="11" r="8.8" fill="none" stroke="#cfcfcf" stroke-width="3.4"/><circle cx="11" cy="2.4" r="1.8" fill="#555"/></svg>
<div class="t" style="left:641.0px;top:182.3px;font-size:18.5px;font-weight:700;color:#333;">Fleet Safety Scorecard</div>
<svg style="left:699px;top:210px" width="84" height="84">
<circle cx="42" cy="42" r="35.5" fill="none" stroke="#ecedb8" stroke-width="10"/>
<circle cx="42" cy="42" r="35.5" fill="none" stroke="#dfe04a" stroke-width="10" stroke-dasharray="214.5 223.05" transform="rotate(-96 42 42)"/>
</svg>
<div class="t" style="left:701.5px;top:230.5px;width:80px;text-align:center;font-size:26px;font-weight:400;color:#777;">A-</div>
<div class="t" style="left:701.0px;top:256.4px;width:80px;text-align:center;font-size:13.5px;font-weight:400;color:#777;">93%</div>
<svg style="left:640px;top:303px" width="10" height="15"><path d="M5 14 V2 M1.5 5.5 L5 1.5 L8.5 5.5" fill="none" stroke="#222" stroke-width="1.8"/></svg>
<div class="t" style="left:652.7px;top:303.9px;font-size:14.9px;font-weight:400;color:#333;">1% from Previous Week (A-)</div>
<div class="t" style="left:851.0px;top:226.8px;width:140px;text-align:center;font-size:15.6px;font-weight:400;color:#333;">Total Mileage</div>
<div class="t" style="left:860.5px;top:277.0px;width:120px;text-align:center;font-size:15.3px;font-weight:400;color:#333;">223.3 mi.</div>
<div class="a" style="left:1000px;top:170px;width:659px;height:180px;overflow:hidden">
<div class="a" style="left:-1000px;top:-170px;width:1910px;height:705px">
<div class="t" style="left:994.5px;top:210.7px;width:160px;text-align:center;font-size:17.5px;font-weight:400;color:#333;">Active</div>
<div class="a" style="left:1044.0px;top:241px;width:61px;height:61px;border-radius:50%;background:#8fba43"></div>
<div class="t" style="left:1044.8px;top:264.0px;width:60px;text-align:center;font-size:16.3px;font-weight:400;color:#fff;-webkit-text-stroke:0.35px #fff">6.0</div>
<div class="t" style="left:994.5px;top:312.3px;width:160px;text-align:center;font-size:15px;font-weight:400;color:#8fba43;">Goal &lt; 0</div>
<div class="t" style="left:1142.5px;top:184.9px;width:160px;text-align:center;font-size:17.2px;font-weight:400;color:#333;">Fuel Efficiency</div>
<div class="t" style="left:1142.5px;top:210.9px;width:160px;text-align:center;font-size:17.2px;font-weight:400;color:#333;">(Overall)</div>
<div class="a" style="left:1192.0px;top:241px;width:61px;height:61px;border-radius:50%;background:#8fba43"></div>
<div class="t" style="left:1192.8px;top:264.0px;width:60px;text-align:center;font-size:16.3px;font-weight:400;color:#fff;-webkit-text-stroke:0.35px #fff">17.9</div>
<div class="t" style="left:1142.5px;top:312.3px;width:160px;text-align:center;font-size:15px;font-weight:400;color:#8fba43;">Goal &gt; 6 mpg</div>
<div class="t" style="left:1291.0px;top:184.9px;width:160px;text-align:center;font-size:17.2px;font-weight:400;color:#333;">Hard Brakes</div>
<div class="t" style="left:1291.0px;top:210.9px;width:160px;text-align:center;font-size:17.2px;font-weight:400;color:#333;">(Count)</div>
<div class="a" style="left:1340.5px;top:241px;width:61px;height:61px;border-radius:50%;background:#8fba43"></div>
<div class="t" style="left:1341.3px;top:264.0px;width:60px;text-align:center;font-size:16.3px;font-weight:400;color:#fff;-webkit-text-stroke:0.35px #fff">0.0</div>
<div class="t" style="left:1291.0px;top:312.3px;width:160px;text-align:center;font-size:15px;font-weight:400;color:#8fba43;">Goal &lt; 1</div>
<div class="t" style="left:1439.5px;top:184.9px;width:160px;text-align:center;font-size:17.2px;font-weight:400;color:#333;">Heavy Accels</div>
<div class="t" style="left:1439.5px;top:210.9px;width:160px;text-align:center;font-size:17.2px;font-weight:400;color:#333;">(Count)</div>
<div class="a" style="left:1489.0px;top:241px;width:61px;height:61px;border-radius:50%;background:#8fba43"></div>
<div class="t" style="left:1489.8px;top:264.0px;width:60px;text-align:center;font-size:16.3px;font-weight:400;color:#fff;-webkit-text-stroke:0.35px #fff">0.0</div>
<div class="t" style="left:1439.5px;top:312.3px;width:160px;text-align:center;font-size:15px;font-weight:400;color:#8fba43;">Goal &lt; 1</div>
<div class="t" style="left:1590.0px;top:210.7px;width:160px;text-align:center;font-size:17.5px;font-weight:400;color:#333;">Idling %</div>
<div class="a" style="left:1637.5px;top:241px;width:61px;height:61px;border-radius:50%;background:#e7ce4b"></div>
<div class="t" style="left:1638.3px;top:264.0px;width:60px;text-align:center;font-size:16.3px;font-weight:400;color:#fff;-webkit-text-stroke:0.35px #fff">32.4</div>
<div class="t" style="left:1588.0px;top:312.3px;width:160px;text-align:center;font-size:15px;font-weight:400;color:#8fba43;">Goal &lt; 20</div>
</div></div>
<div class="a" style="left:1000px;top:331px;width:659px;height:16px;background:#f0f0f0"></div>
<svg style="left:1004px;top:335px" width="6" height="8"><path d="M5 0 L0 4 L5 8 Z" fill="#a3a3a3"/></svg>
<svg style="left:1648px;top:335px" width="6" height="8"><path d="M0 0 L5 4 L0 8 Z" fill="#505050"/></svg>
<div class="a" style="left:1017px;top:333px;width:346px;height:12px;background:#c1c1c1"></div>
<div class="a" style="left:1692px;top:180px;width:184px;height:42px;background:#fff;border:1px solid #dcdcdc;border-radius:4px"></div>
<div class="t" style="left:1706.8px;top:192.6px;font-size:17px;font-weight:400;color:#333;">Current Week</div>
<svg style="left:1853px;top:193px" width="9" height="15"><path d="M0.5 6 L4.5 1 L8.5 6 Z M0.5 9 L4.5 14 L8.5 9 Z" fill="#333"/></svg>
<div class="a" style="left:1692px;top:315px;width:184px;height:41px;background:#eeeeee;border:1px solid #d6d6d6;border-radius:4px"></div>
<div class="a" style="left:1791px;top:321px;width:80px;height:30px;background:#4a7db6;border-radius:4px"></div>
<div class="t" style="left:1692.3px;top:327.9px;width:100px;text-align:center;font-size:16.7px;font-weight:400;color:#333;">Region</div>
<div class="t" style="left:1791.5px;top:327.1px;width:80px;text-align:center;font-size:17.6px;font-weight:400;color:#fff;">Asset</div>
<div class="a" style="left:625px;top:367px;width:1251px;height:80px;background:#0b4f9b"></div>
<div class="t" style="left:630.4px;top:399.3px;font-size:15px;font-weight:400;color:#fff;-webkit-text-stroke:0.45px #fff">Asset</div>
<svg style="left:675px;top:401px" width="13" height="11"><path d="M0.5 10.5 L6.5 0.5 L12.5 10.5 Z" fill="#c8c8c8"/></svg>
<div class="t" style="left:797.0px;top:399.3px;font-size:15px;font-weight:400;color:#fff;-webkit-text-stroke:0.45px #fff">Region</div>
<div class="t" style="left:922.0px;top:399.3px;font-size:15px;font-weight:400;color:#fff;-webkit-text-stroke:0.45px #fff">Score</div>
<div class="t" style="left:1014.0px;top:399.3px;font-size:15px;font-weight:400;color:#fff;-webkit-text-stroke:0.45px #fff">Rank</div>
<div class="t" style="left:1083.0px;top:399.3px;font-size:15px;font-weight:400;color:#fff;-webkit-text-stroke:0.45px #fff">Mileage</div>
<div class="t" style="left:1150.0px;top:399.3px;font-size:15px;font-weight:400;color:#fff;-webkit-text-stroke:0.45px #fff">Active</div>
<div class="t" style="left:1241.0px;top:376.3px;font-size:15px;font-weight:400;color:#fff;-webkit-text-stroke:0.45px #fff">Fuel</div>
<div class="t" style="left:1241.0px;top:399.8px;font-size:15px;font-weight:400;color:#fff;-webkit-text-stroke:0.45px #fff">Efficiency</div>
<div class="t" style="left:1241.0px;top:423.3px;font-size:15px;font-weight:400;color:#fff;-webkit-text-stroke:0.45px #fff">(Overall)</div>
<div class="t" style="left:1332.5px;top:376.3px;font-size:15px;font-weight:400;color:#fff;-webkit-text-stroke:0.45px #fff">Hard</div>
<div class="t" style="left:1332.5px;top:399.8px;font-size:15px;font-weight:400;color:#fff;-webkit-text-stroke:0.45px #fff">Brakes</div>
<div class="t" style="left:1332.5px;top:423.3px;font-size:15px;font-weight:400;color:#fff;-webkit-text-stroke:0.45px #fff">(Count)</div>
<div class="t" style="left:1424.0px;top:376.3px;font-size:15px;font-weight:400;color:#fff;-webkit-text-stroke:0.45px #fff">Heavy</div>
<div class="t" style="left:1424.0px;top:399.8px;font-size:15px;font-weight:400;color:#fff;-webkit-text-stroke:0.45px #fff">Accels</div>
<div class="t" style="left:1424.0px;top:423.3px;font-size:15px;font-weight:400;color:#fff;-webkit-text-stroke:0.45px #fff">(Count)</div>
<div class="t" style="left:1515.5px;top:399.3px;font-size:15px;font-weight:400;color:#fff;-webkit-text-stroke:0.45px #fff">Idling %</div>
<div class="t" style="left:1606.7px;top:387.8px;font-size:15px;font-weight:400;color:#fff;-webkit-text-stroke:0.45px #fff">Non-Driving</div>
<div class="t" style="left:1606.7px;top:411.3px;font-size:15px;font-weight:400;color:#fff;-webkit-text-stroke:0.45px #fff">Idle Time</div>
<div class="t" style="left:1698.2px;top:387.8px;font-size:15px;font-weight:400;color:#fff;-webkit-text-stroke:0.45px #fff">RPM &gt;2300</div>
<div class="t" style="left:1698.2px;top:411.3px;font-size:15px;font-weight:400;color:#fff;-webkit-text-stroke:0.45px #fff">Duration</div>
<div class="t" style="left:1790.0px;top:376.3px;font-size:15px;font-weight:400;color:#fff;-webkit-text-stroke:0.45px #fff">Speeding</div>
<div class="t" style="left:1790.0px;top:399.8px;font-size:15px;font-weight:400;color:#fff;-webkit-text-stroke:0.45px #fff">&gt;5mph</div>
<div class="t" style="left:1790.0px;top:423.3px;font-size:15px;font-weight:400;color:#fff;-webkit-text-stroke:0.45px #fff">(Count)</div>
<div class="a" style="left:625px;top:447px;width:1251px;height:53.5px;background:#fafafa"></div>
<svg style="left:630px;top:470.9px" width="18" height="10">
<path d="M0.5 4.6 L2.6 1.8 L4.4 0.3 L9.2 0.3 L9.2 3.4 L18 3.4 L18 7.6 L0.5 7.6 Z" fill="#c8202a"/><path d="M4.6 1.3 L8.2 1.3 L8.2 3.9 L2.6 3.9 Z" fill="#2a1212"/><rect x="0.3" y="4.6" width="1.2" height="1.4" fill="#4a6fd0"/>
<circle cx="4.2" cy="7.6" r="1.9" fill="#222"/><circle cx="15.6" cy="7.6" r="1.9" fill="#222"/></svg>
<div class="t" style="left:655.5px;top:467.0px;font-size:15px;font-weight:400;color:#333;"><u>286</u></div>
<div class="a" style="left:796.8px;top:466.4px;width:17.4px;height:16.8px;border-radius:50%;background:radial-gradient(ellipse 22% 16% at 50% 21%, #eef7fc 0%, #d7ebf7 35%, rgba(110,155,198,0.95) 70%, rgba(110,155,198,0) 100%), radial-gradient(ellipse 45% 30% at 50% 26%, rgba(108,150,192,0.9) 0%, rgba(108,150,192,0.5) 60%, rgba(108,150,192,0) 100%), linear-gradient(#78addb, #5eafe2 45%, #3a85cc)"></div>
<div class="t" style="left:822.8px;top:467.4px;font-size:14.5px;font-weight:400;color:#333;"><u>OBD-II Plugin</u></div>
<div class="a" style="left:923px;top:457.5px;width:1px;height:33px;background:#333"></div>
<div class="a" style="left:924px;top:464.2px;width:36px;height:19.5px;background:#4b6291"></div>
<div class="t" style="left:969.6px;top:467.0px;font-size:15px;font-weight:400;color:#333;">100%</div>
<div class="t" style="left:1014.0px;top:467.0px;font-size:15px;font-weight:400;color:#333;">1st/23</div>
<div class="t" style="left:1083.0px;top:467.0px;font-size:15px;font-weight:400;color:#333;">0 mi.</div>
<div class="a" style="left:1150px;top:457.5px;width:1px;height:33px;background:#333"></div>
<div class="t" style="left:1212.5px;top:467.0px;font-size:15px;font-weight:400;color:#333;">0</div>
<div class="t" style="left:1241.5px;top:467.0px;font-size:15px;font-weight:400;color:#333;">-</div>
<div class="t" style="left:1332.5px;top:467.0px;font-size:15px;font-weight:400;color:#333;">-</div>
<div class="t" style="left:1424.0px;top:467.0px;font-size:15px;font-weight:400;color:#333;">-</div>
<div class="t" style="left:1515.5px;top:467.0px;font-size:15px;font-weight:400;color:#333;">-</div>
<div class="a" style="left:1607px;top:457.5px;width:1px;height:33px;background:#333"></div>
<div class="t" style="left:1657.0px;top:467.0px;font-size:15px;font-weight:400;color:#333;">0</div>
<div class="a" style="left:1698px;top:457.5px;width:1px;height:33px;background:#333"></div>
<div class="t" style="left:1740.0px;top:467.0px;font-size:15px;font-weight:400;color:#333;">0</div>
<div class="t" style="left:1790.5px;top:467.0px;font-size:15px;font-weight:400;color:#333;">-</div>
<div class="a" style="left:625px;top:500.5px;width:1251px;height:56.5px;background:#ffffff"></div>
<svg style="left:630px;top:525.9px" width="18" height="10">
<path d="M0.5 4.6 L2.6 1.8 L4.4 0.3 L9.2 0.3 L9.2 3.4 L18 3.4 L18 7.6 L0.5 7.6 Z" fill="#c8202a"/><path d="M4.6 1.3 L8.2 1.3 L8.2 3.9 L2.6 3.9 Z" fill="#2a1212"/><rect x="0.3" y="4.6" width="1.2" height="1.4" fill="#4a6fd0"/>
<circle cx="4.2" cy="7.6" r="1.9" fill="#222"/><circle cx="15.6" cy="7.6" r="1.9" fill="#222"/></svg>
<div class="t" style="left:655.5px;top:522.0px;font-size:15px;font-weight:400;color:#333;"><u>Dans Truck</u></div>
<div class="a" style="left:796.8px;top:521.4px;width:17.4px;height:16.8px;border-radius:50%;background:radial-gradient(ellipse 22% 16% at 50% 21%, #eef7fc 0%, #d7ebf7 35%, rgba(110,155,198,0.95) 70%, rgba(110,155,198,0) 100%), radial-gradient(ellipse 45% 30% at 50% 26%, rgba(108,150,192,0.9) 0%, rgba(108,150,192,0.5) 60%, rgba(108,150,192,0) 100%), linear-gradient(#78addb, #5eafe2 45%, #3a85cc)"></div>
<div class="t" style="left:822.8px;top:522.4px;font-size:14.5px;font-weight:400;color:#333;"><u>OBD-II Plugin</u></div>
<div class="a" style="left:923px;top:512.5px;width:1px;height:33px;background:#333"></div>
<div class="a" style="left:924px;top:519.2px;width:35px;height:19.5px;background:#4b6291"></div>
<div class="t" style="left:969.6px;top:522.0px;font-size:15px;font-weight:400;color:#333;">94%</div>
<div class="t" style="left:1014.0px;top:522.0px;font-size:15px;font-weight:400;color:#333;">20th/23</div>
<div class="t" style="left:1083.0px;top:522.0px;font-size:15px;font-weight:400;color:#333;">0.3 mi.</div>
<div class="a" style="left:1150px;top:512.5px;width:1px;height:33px;background:#333"></div>
<div class="a" style="left:1151px;top:519.2px;width:53.4px;height:19.5px;background:#8fba43"></div>
<div class="t" style="left:1213.0px;top:522.0px;font-size:15px;font-weight:400;color:#333;">1</div>
<div class="t" style="left:1241.5px;top:522.0px;font-size:15px;font-weight:400;color:#333;">-</div>
<div class="a" style="left:1332px;top:512.5px;width:1px;height:33px;background:#333"></div>
<div class="t" style="left:1366.5px;top:522.0px;font-size:15px;font-weight:400;color:#333;">0</div>
<div class="a" style="left:1424px;top:512.5px;width:1px;height:33px;background:#333"></div>
<div class="t" style="left:1458.5px;top:522.0px;font-size:15px;font-weight:400;color:#333;">0</div>
<div class="a" style="left:1515px;top:512.5px;width:1px;height:33px;background:#333"></div>
<div class="a" style="left:1516px;top:519.2px;width:32.3px;height:19.5px;background:#c9d743"></div>
<div class="t" style="left:1557.7px;top:522.0px;font-size:15px;font-weight:400;color:#333;">70.8</div>
<div class="a" style="left:1607px;top:512.5px;width:1px;height:33px;background:#333"></div>
<div class="t" style="left:1657.0px;top:522.0px;font-size:15px;font-weight:400;color:#333;">0</div>
<div class="a" style="left:1698px;top:512.5px;width:1px;height:33px;background:#333"></div>
<div class="t" style="left:1740.0px;top:522.0px;font-size:15px;font-weight:400;color:#333;">0</div>
<div class="a" style="left:1790px;top:512.5px;width:1px;height:33px;background:#333"></div>
<div class="t" style="left:1844.0px;top:522.0px;font-size:15px;font-weight:400;color:#333;">0</div>
<div class="a" style="left:625px;top:557px;width:1251px;height:54px;background:#fafafa"></div>
<svg style="left:630px;top:580.9px" width="18" height="11">
<path d="M3.2 3 L5.6 0.9 L17 0.9 L17 6.6 L1.8 6.6 L1.8 4 Z" fill="#fff"/><rect x="6" y="1.2" width="2.6" height="2" fill="#222"/><rect x="9.6" y="1.2" width="2.6" height="2" fill="#222"/><rect x="13.2" y="1.2" width="2.6" height="2" fill="#222"/><path d="M6.5 0.9 H17 V6.6" fill="none" stroke="#444" stroke-width="0.6"/>
<path d="M0.9 3 V8.2" stroke="#222" stroke-width="1.3"/><path d="M1 6.6 H17" stroke="#222" stroke-width="1.1"/>
<circle cx="4.6" cy="7.4" r="1.9" fill="#fff" stroke="#222" stroke-width="1.3"/><circle cx="14" cy="7.4" r="1.9" fill="#fff" stroke="#222" stroke-width="1.3"/></svg>
<div class="t" style="left:655.5px;top:577.0px;font-size:15px;font-weight:400;color:#333;"><u>Jim</u></div>
<div class="a" style="left:796.8px;top:576.4px;width:17.4px;height:16.8px;border-radius:50%;background:radial-gradient(ellipse 22% 16% at 50% 21%, #eef7fc 0%, #d7ebf7 35%, rgba(110,155,198,0.95) 70%, rgba(110,155,198,0) 100%), radial-gradient(ellipse 45% 30% at 50% 26%, rgba(108,150,192,0.9) 0%, rgba(108,150,192,0.5) 60%, rgba(108,150,192,0) 100%), linear-gradient(#78addb, #5eafe2 45%, #3a85cc)"></div>
<div class="t" style="left:822.8px;top:577.4px;font-size:14.5px;font-weight:400;color:#333;"><u>OBD-II Plugin</u></div>
<div class="a" style="left:923px;top:567.5px;width:1px;height:33px;background:#333"></div>
<div class="a" style="left:924px;top:574.2px;width:36px;height:19.5px;background:#4b6291"></div>
<div class="t" style="left:969.6px;top:577.0px;font-size:15px;font-weight:400;color:#333;">100%</div>
<div class="t" style="left:1014.0px;top:577.0px;font-size:15px;font-weight:400;color:#333;">1st/23</div>
<div class="t" style="left:1083.0px;top:577.0px;font-size:15px;font-weight:400;color:#333;">0 mi.</div>
<div class="a" style="left:1150px;top:567.5px;width:1px;height:33px;background:#333"></div>
<div class="t" style="left:1212.5px;top:577.0px;font-size:15px;font-weight:400;color:#333;">0</div>
<div class="t" style="left:1241.5px;top:577.0px;font-size:15px;font-weight:400;color:#333;">-</div>
<div class="t" style="left:1332.5px;top:577.0px;font-size:15px;font-weight:400;color:#333;">-</div>
<div class="t" style="left:1424.0px;top:577.0px;font-size:15px;font-weight:400;color:#333;">-</div>
<div class="t" style="left:1515.5px;top:577.0px;font-size:15px;font-weight:400;color:#333;">-</div>
<div class="a" style="left:1607px;top:567.5px;width:1px;height:33px;background:#333"></div>
<div class="t" style="left:1657.0px;top:577.0px;font-size:15px;font-weight:400;color:#333;">0</div>
<div class="a" style="left:1698px;top:567.5px;width:1px;height:33px;background:#333"></div>
<div class="t" style="left:1740.0px;top:577.0px;font-size:15px;font-weight:400;color:#333;">0</div>
<div class="t" style="left:1790.5px;top:577.0px;font-size:15px;font-weight:400;color:#333;">-</div>
<div class="a" style="left:625px;top:611px;width:1251px;height:55.5px;background:#ffffff"></div>
<svg style="left:630px;top:635.9px" width="18" height="10">
<path d="M0.3 4.6 C0.3 3.8 1 3.3 2.6 3.1 L5.2 1 L12.2 1 L14.9 3.1 C16.6 3.3 17.3 3.9 17.3 4.8 L17.3 7 L0.3 7 Z" fill="#b3bac4"/><path d="M5.6 1.4 L11.8 1.4 L13.6 3.1 L4 3.1 Z" fill="#1e1e24"/><rect x="0" y="4.2" width="1" height="1.8" fill="#7a8ccc"/>
<circle cx="4" cy="7" r="1.8" fill="#333"/><circle cx="13.8" cy="7" r="1.8" fill="#333"/></svg>
<div class="t" style="left:655.5px;top:632.0px;font-size:15px;font-weight:400;color:#333;"><u>JoeN</u></div>
<div class="a" style="left:796.8px;top:631.4px;width:17.4px;height:16.8px;border-radius:50%;background:radial-gradient(ellipse 22% 16% at 50% 21%, #eef7fc 0%, #d7ebf7 35%, rgba(110,155,198,0.95) 70%, rgba(110,155,198,0) 100%), radial-gradient(ellipse 45% 30% at 50% 26%, rgba(108,150,192,0.9) 0%, rgba(108,150,192,0.5) 60%, rgba(108,150,192,0) 100%), linear-gradient(#78addb, #5eafe2 45%, #3a85cc)"></div>
<div class="t" style="left:822.8px;top:632.4px;font-size:14.5px;font-weight:400;color:#333;"><u>OBD-II Plugin</u></div>
<div class="a" style="left:923px;top:622.5px;width:1px;height:33px;background:#333"></div>
<div class="a" style="left:924px;top:629.2px;width:29px;height:19.5px;background:#4b6291"></div>
<div class="t" style="left:969.6px;top:632.0px;font-size:15px;font-weight:400;color:#333;">79%</div>
<div class="t" style="left:1014.0px;top:632.0px;font-size:15px;font-weight:400;color:#333;">23rd/23</div>
<div class="t" style="left:1083.0px;top:632.0px;font-size:15px;font-weight:400;color:#333;">61.9 mi.</div>
<div class="a" style="left:1150px;top:622.5px;width:1px;height:33px;background:#333"></div>
<div class="a" style="left:1151px;top:629.2px;width:53.4px;height:19.5px;background:#8fba43"></div>
<div class="t" style="left:1213.0px;top:632.0px;font-size:15px;font-weight:400;color:#333;">1</div>
<div class="a" style="left:1241px;top:622.5px;width:1px;height:33px;background:#333"></div>
<div class="a" style="left:1242px;top:629.2px;width:28.5px;height:19.5px;background:#8fba43"></div>
<div class="t" style="left:1296.0px;top:632.0px;font-size:15px;font-weight:400;color:#333;">16.1</div>
<div class="a" style="left:1332px;top:622.5px;width:1px;height:33px;background:#333"></div>
<div class="t" style="left:1366.5px;top:632.0px;font-size:15px;font-weight:400;color:#333;">0</div>
<div class="a" style="left:1424px;top:622.5px;width:1px;height:33px;background:#333"></div>
<div class="t" style="left:1458.5px;top:632.0px;font-size:15px;font-weight:400;color:#333;">0</div>
<div class="a" style="left:1515px;top:622.5px;width:1px;height:33px;background:#333"></div>
<div class="a" style="left:1516px;top:629.2px;width:6px;height:19.5px;background:#8fba43"></div>
<div class="t" style="left:1557.7px;top:632.0px;font-size:15px;font-weight:400;color:#333;">13.5</div>
<div class="a" style="left:1607px;top:622.5px;width:1px;height:33px;background:#333"></div>
<div class="a" style="left:1608px;top:629.2px;width:11px;height:19.5px;background:#8fba43"></div>
<div class="t" style="left:1657.0px;top:632.0px;font-size:15px;font-weight:400;color:#333;">0.1</div>
<div class="a" style="left:1698px;top:622.5px;width:1px;height:33px;background:#333"></div>
<div class="t" style="left:1740.0px;top:632.0px;font-size:15px;font-weight:400;color:#333;">0</div>
<div class="a" style="left:1790px;top:622.5px;width:1px;height:33px;background:#333"></div>
<div class="a" style="left:1791px;top:629.2px;width:44.4px;height:19.5px;background:#fd9a5b"></div>
<div class="t" style="left:1844.0px;top:632.0px;font-size:15px;font-weight:400;color:#333;">41</div>
<div class="a" style="left:625px;top:666.5px;width:1251px;height:54.5px;background:#fafafa"></div>
<svg style="left:630px;top:690.9px" width="18" height="10">
<path d="M0.5 4.6 L2.6 1.8 L4.4 0.3 L9.2 0.3 L9.2 3.4 L18 3.4 L18 7.6 L0.5 7.6 Z" fill="#c8202a"/><path d="M4.6 1.3 L8.2 1.3 L8.2 3.9 L2.6 3.9 Z" fill="#2a1212"/><rect x="0.3" y="4.6" width="1.2" height="1.4" fill="#4a6fd0"/>
<circle cx="4.2" cy="7.6" r="1.9" fill="#222"/><circle cx="15.6" cy="7.6" r="1.9" fill="#222"/></svg>
<div class="t" style="left:655.5px;top:687.0px;font-size:15px;font-weight:400;color:#333;"><u>John's Truck</u></div>
<div class="a" style="left:796.8px;top:686.4px;width:17.4px;height:16.8px;border-radius:50%;background:radial-gradient(ellipse 22% 16% at 50% 21%, #eef7fc 0%, #d7ebf7 35%, rgba(110,155,198,0.95) 70%, rgba(110,155,198,0) 100%), radial-gradient(ellipse 45% 30% at 50% 26%, rgba(108,150,192,0.9) 0%, rgba(108,150,192,0.5) 60%, rgba(108,150,192,0) 100%), linear-gradient(#78addb, #5eafe2 45%, #3a85cc)"></div>
<div class="t" style="left:822.8px;top:687.4px;font-size:14.5px;font-weight:400;color:#333;"><u>OBD-II Plugin</u></div>
<div class="a" style="left:923px;top:677.5px;width:1px;height:33px;background:#333"></div>
<div class="a" style="left:924px;top:684.2px;width:35px;height:19.5px;background:#4b6291"></div>
<div class="t" style="left:969.6px;top:687.0px;font-size:15px;font-weight:400;color:#333;">94%</div>
<div class="t" style="left:1014.0px;top:687.0px;font-size:15px;font-weight:400;color:#333;">21st/23</div>
<div class="t" style="left:1083.0px;top:687.0px;font-size:15px;font-weight:400;color:#333;">25.7 mi.</div>
<div class="a" style="left:1150px;top:677.5px;width:1px;height:33px;background:#333"></div>
<div class="a" style="left:1151px;top:684.2px;width:53.4px;height:19.5px;background:#8fba43"></div>
<div class="t" style="left:1213.0px;top:687.0px;font-size:15px;font-weight:400;color:#333;">1</div>
<div class="a" style="left:1241px;top:677.5px;width:1px;height:33px;background:#333"></div>
<div class="a" style="left:1242px;top:684.2px;width:23.5px;height:19.5px;background:#8fba43"></div>
<div class="t" style="left:1296.0px;top:687.0px;font-size:15px;font-weight:400;color:#333;">13.4</div>
<div class="a" style="left:1332px;top:677.5px;width:1px;height:33px;background:#333"></div>
<div class="t" style="left:1366.5px;top:687.0px;font-size:15px;font-weight:400;color:#333;">0</div>
<div class="a" style="left:1424px;top:677.5px;width:1px;height:33px;background:#333"></div>
<div class="t" style="left:1458.5px;top:687.0px;font-size:15px;font-weight:400;color:#333;">0</div>
<div class="a" style="left:1515px;top:677.5px;width:1px;height:33px;background:#333"></div>
<div class="a" style="left:1516px;top:684.2px;width:16px;height:19.5px;background:#8fba43"></div>
<div class="t" style="left:1557.7px;top:687.0px;font-size:15px;font-weight:400;color:#333;">32</div>
<div class="a" style="left:1607px;top:677.5px;width:1px;height:33px;background:#333"></div>
<div class="a" style="left:1608px;top:684.2px;width:11px;height:19.5px;background:#8fba43"></div>
<div class="t" style="left:1657.0px;top:687.0px;font-size:15px;font-weight:400;color:#333;">0.1</div>
<div class="a" style="left:1698px;top:677.5px;width:1px;height:33px;background:#333"></div>
<div class="t" style="left:1740.0px;top:687.0px;font-size:15px;font-weight:400;color:#333;">0</div>
<div class="a" style="left:1790px;top:677.5px;width:1px;height:33px;background:#333"></div>
<div class="a" style="left:1791px;top:684.2px;width:10px;height:19.5px;background:#c9d743"></div>
<div class="t" style="left:1844.0px;top:687.0px;font-size:15px;font-weight:400;color:#333;">9</div>
</body></html>
